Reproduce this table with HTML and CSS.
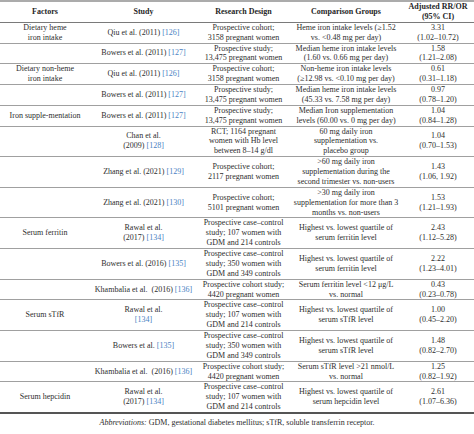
FILE: index.html
```html
<!DOCTYPE html>
<html>
<head>
<meta charset="utf-8">
<link rel="stylesheet" href="styles.css">
</head>
<body>
<table class="tbl">
  <colgroup>
    <col class="c-factor"><col class="c-study"><col class="c-design"><col class="c-comp"><col class="c-rr">
  </colgroup>
  <thead>
    <tr>
      <th>Factors</th><th>Study</th><th>Research Design</th><th>Comparison Groups</th><th>Adjusted RR/OR<br>(95% CI)</th>
    </tr>
  </thead>
  <tbody>
    <tr>
      <td>Dietary heme<br>iron intake</td>
      <td>Qiu et al. (2011) <span class="ref">[126]</span></td>
      <td>Prospective cohort;<br>3158 pregnant women</td>
      <td>Heme iron intake levels (≥1.52<br>vs. &lt;0.48 mg per day)</td>
      <td>3.31<br>(1.02–10.72)</td>
    </tr>
    <tr>
      <td></td>
      <td>Bowers et al. (2011) <span class="ref">[127]</span></td>
      <td>Prospective study;<br>13,475 pregnant women</td>
      <td>Median heme iron intake levels<br>(1.60 vs. 0.66 mg per day)</td>
      <td>1.58<br>(1.21–2.08)</td>
    </tr>
    <tr>
      <td>Dietary non-heme<br>iron intake</td>
      <td>Qiu et al. (2011) <span class="ref">[126]</span></td>
      <td>Prospective cohort;<br>3158 pregnant women</td>
      <td>Non-heme iron intake levels<br>(≥12.98 vs. &lt;0.10 mg per day)</td>
      <td>0.61<br>(0.31–1.18)</td>
    </tr>
    <tr>
      <td></td>
      <td>Bowers et al. (2011) <span class="ref">[127]</span></td>
      <td>Prospective study;<br>13,475 pregnant women</td>
      <td>Median heme iron intake levels<br>(45.33 vs. 7.58 mg per day)</td>
      <td>0.97<br>(0.78–1.20)</td>
    </tr>
    <tr>
      <td>Iron supple-mentation</td>
      <td>Bowers et al. (2011) <span class="ref">[127]</span></td>
      <td>Prospective study;<br>13,475 pregnant women</td>
      <td>Median Iron supplementation<br>levels (60.00 vs. 0 mg per day)</td>
      <td>1.04<br>(0.84–1.28)</td>
    </tr>
    <tr>
      <td></td>
      <td>Chan et al.<br>(2009) <span class="ref">[128]</span></td>
      <td>RCT; 1164 pregnant<br>women with Hb level<br>between 8–14 g/dl</td>
      <td>60 mg daily iron<br>supplementation vs.<br>placebo group</td>
      <td>1.04<br>(0.70–1.53)</td>
    </tr>
    <tr>
      <td></td>
      <td>Zhang et al. (2021) <span class="ref">[129]</span></td>
      <td>Prospective cohort;<br>2117 pregnant women</td>
      <td>&gt;60 mg daily iron<br>supplementation during the<br>second trimester vs. non-users</td>
      <td>1.43<br>(1.06, 1.92)</td>
    </tr>
    <tr>
      <td></td>
      <td>Zhang et al. (2021) <span class="ref">[130]</span></td>
      <td>Prospective cohort;<br>5101 pregnant women</td>
      <td>&gt;30 mg daily iron<br>supplementation for more than 3<br>months vs. non-users</td>
      <td>1.53<br>(1.21–1.93)</td>
    </tr>
    <tr>
      <td>Serum ferritin</td>
      <td>Rawal et al.<br>(2017) <span class="ref">[134]</span></td>
      <td>Prospective case–control<br>study; 107 women with<br>GDM and 214 controls</td>
      <td>Highest vs. lowest quartile of<br>serum ferritin level</td>
      <td>2.43<br>(1.12–5.28)</td>
    </tr>
    <tr>
      <td></td>
      <td>Bowers et al. (2016) <span class="ref">[135]</span></td>
      <td>Prospective case–control<br>study; 350 women with<br>GDM and 349 controls</td>
      <td>Highest vs. lowest quartile of<br>serum ferritin level</td>
      <td>2.22<br>(1.23–4.01)</td>
    </tr>
    <tr>
      <td></td>
      <td>Khambalia et al. &nbsp;(2016) <span class="ref">[136]</span></td>
      <td>Prospective cohort study;<br>4420 pregnant women</td>
      <td>Serum ferritin level &lt;12 μg/L<br>vs. normal</td>
      <td>0.43<br>(0.23–0.78)</td>
    </tr>
    <tr>
      <td>Serum sTfR</td>
      <td>Rawal et al.<br><span class="ref">[134]</span></td>
      <td>Prospective case–control<br>study; 107 women with<br>GDM and 214 controls</td>
      <td>Highest vs. lowest quartile of<br>serum sTfR level</td>
      <td>1.00<br>(0.45–2.20)</td>
    </tr>
    <tr>
      <td></td>
      <td>Bowers et al. <span class="ref">[135]</span></td>
      <td>Prospective case–control<br>study; 350 women with<br>GDM and 349 controls</td>
      <td>Highest vs. lowest quartile of<br>serum sTfR level</td>
      <td>1.48<br>(0.82–2.70)</td>
    </tr>
    <tr>
      <td></td>
      <td>Khambalia et al. &nbsp;(2016) <span class="ref">[136]</span></td>
      <td>Prospective cohort study;<br>4420 pregnant women</td>
      <td>Serum sTfR level &gt;21 nmol/L<br>vs. normal</td>
      <td>1.25<br>(0.82–1.92)</td>
    </tr>
    <tr>
      <td>Serum hepcidin</td>
      <td>Rawal et al.<br>(2017) <span class="ref">[134]</span></td>
      <td>Prospective case–control<br>study; 107 women with<br>GDM and 214 controls</td>
      <td>Highest vs. lowest quartile of<br>serum hepcidin level</td>
      <td>2.61<br>(1.07–6.36)</td>
    </tr>
  </tbody>
</table>
<p class="abbr"><em>Abbreviations:</em> GDM, gestational diabetes mellitus; sTfR, soluble transferrin receptor.</p>
</body>
</html>
```

FILE: styles.css
```css
html, body {
  margin: 0;
  padding: 0;
  background: #ffffff;
}
body {
  width: 474px;
  font-family: "Liberation Serif", "Times New Roman", serif;
  font-size: 8px;
  line-height: 9.87px;
  color: #2e2e2e;
}
.tbl {
  width: 474px;
  border-collapse: collapse;
  table-layout: fixed;
  border-top: 2px solid #ababab;
  border-bottom: 2px solid #555555;
}
.c-factor { width: 90px; }
.c-study { width: 107px; }
.c-design { width: 93px; }
.c-comp { width: 112px; }
.c-rr { width: 72px; }
.tbl th,
.tbl td {
  padding: 0 2px;
  text-align: center;
  vertical-align: middle;
  white-space: nowrap;
}
.tbl th {
  font-weight: bold;
  color: #262626;
  border-bottom: 1px solid #7a7a7a;
}
.tbl td {
  border-bottom: 1px solid #a0a0a0;
}
.ref {
  color: #4a82c3;
}
.abbr {
  margin: 4px 0 0;
  line-height: 10px;
  text-align: center;
}
```
